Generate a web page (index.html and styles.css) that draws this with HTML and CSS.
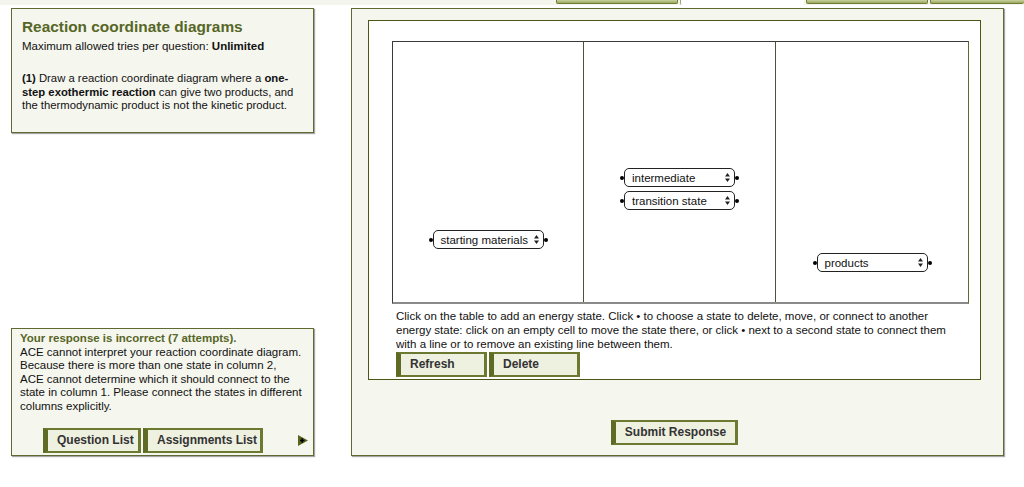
FILE: index.html
```html
<!DOCTYPE html>
<html>
<head>
<meta charset="utf-8">
<title>Reaction coordinate diagrams</title>
<link rel="stylesheet" href="styles.css">
</head>
<body>
<div class="topbar">
  <div class="tab tab-1"></div>
  <div class="tab tab-active"></div>
  <div class="tab tab-3"></div>
  <div class="tab tab-4"></div>
</div>
<div class="main">
  <div class="left-col">
    <div class="panel panel-question">
      <h1 class="title">Reaction coordinate diagrams</h1>
      <p class="tries">Maximum allowed tries per question: <b>Unlimited</b></p>
      <p class="question"><b>(1)</b> Draw a reaction coordinate diagram where a <b>one-<br>step exothermic reaction</b> can give two products, and<br>the thermodynamic product is not the kinetic product.</p>
    </div>
    <div class="panel panel-response">
      <p class="resp-title">Your response is incorrect (7 attempts).</p>
      <p class="resp-text">ACE cannot interpret your reaction coordinate diagram.<br>Because there is more than one state in column 2,<br>ACE cannot determine which it should connect to the<br>state in column 1. Please connect the states in different<br>columns explicitly.</p>
      <div class="nav-row">
        <button class="btn btn-nav btn-questions">Question List</button>
        <button class="btn btn-nav btn-assignments">Assignments List</button>
        <svg class="next-icon" width="10" height="11" viewBox="0 0 10 11"><polygon points="0,0 10,5.5 0,11" fill="#56641c"/><path d="M2 5.5h4.4M4.2 3.3v4.4" stroke="#000" stroke-width="1.5"/></svg>
      </div>
    </div>
  </div>
  <div class="panel panel-work">
    <div class="canvas-box">
      <div class="rcd-table">
        <div class="rcd-col">
          <div class="state" style="top:188px"><span class="dot"></span><div class="state-box"><span>starting materials</span><svg class="updown" width="5" height="9" viewBox="0 0 5 9"><polygon points="2.5,0 5,3.5 0,3.5" fill="#222"/><polygon points="0,5.5 5,5.5 2.5,9" fill="#222"/></svg></div><span class="dot"></span></div>
        </div>
        <div class="rcd-col">
          <div class="state" style="top:126px"><span class="dot"></span><div class="state-box"><span>intermediate</span><svg class="updown" width="5" height="9" viewBox="0 0 5 9"><polygon points="2.5,0 5,3.5 0,3.5" fill="#222"/><polygon points="0,5.5 5,5.5 2.5,9" fill="#222"/></svg></div><span class="dot"></span></div>
          <div class="state" style="top:149px"><span class="dot"></span><div class="state-box"><span>transition state</span><svg class="updown" width="5" height="9" viewBox="0 0 5 9"><polygon points="2.5,0 5,3.5 0,3.5" fill="#222"/><polygon points="0,5.5 5,5.5 2.5,9" fill="#222"/></svg></div><span class="dot"></span></div>
        </div>
        <div class="rcd-col">
          <div class="state" style="top:211px"><span class="dot"></span><div class="state-box"><span>products</span><svg class="updown" width="5" height="9" viewBox="0 0 5 9"><polygon points="2.5,0 5,3.5 0,3.5" fill="#222"/><polygon points="0,5.5 5,5.5 2.5,9" fill="#222"/></svg></div><span class="dot"></span></div>
        </div>
      </div>
      <p class="instructions">Click on the table to add an energy state. Click &bull; to choose a state to delete, move, or connect to another<br>energy state: click on an empty cell to move the state there, or click &bull; next to a second state to connect them<br>with a line or to remove an existing line between them.</p>
      <div class="tool-row">
        <button class="btn btn-fixed">Refresh</button>
        <button class="btn btn-fixed">Delete</button>
      </div>
    </div>
    <div class="submit-row">
      <button class="btn">Submit Response</button>
    </div>
  </div>
</div>
</body>
</html>
```

FILE: styles.css
```css
* { box-sizing: border-box; }

body {
  margin: 0;
  background: #ffffff;
  font-family: "Liberation Sans", Arial, sans-serif;
  font-size: 11.5px;
  color: #111;
  width: 1024px;
  height: 487px;
  overflow: hidden;
}

.topbar {
  height: 5px;
  background: #f4f5ec;
  display: flex;
  padding-left: 556px;
}
.tab {
  height: 4px;
  background: linear-gradient(#c8d19c, #9aa860);
  border: 1px solid #6f7d35;
  border-top: none;
  border-radius: 0 0 2px 2px;
}
.tab-1 { width: 122px; }
.tab-active {
  width: 124px;
  height: 5px;
  background: #ffffff;
  border: none;
  border-left: 1px solid #9aa37a;
  margin-left: 2px;
}
.tab-3 { width: 122px; margin-left: 2px; }
.tab-4 { flex: 1; margin-left: 2px; border-right: none; }

.main {
  display: flex;
  margin-top: 3px;
  padding-left: 11px;
  gap: 37px;
}

.panel {
  background: #f5f6ee;
  border: 1px solid #5f6a32;
  box-shadow: 1px 1px 1px rgba(0, 0, 0, 0.35);
}

.left-col {
  width: 303px;
  height: 448px;
  display: flex;
  flex-direction: column;
  justify-content: space-between;
}

.panel-question {
  height: 125px;
  padding: 9px 8px 0 10px;
  white-space: nowrap;
}
.title {
  margin: 0;
  font-size: 15.4px;
  line-height: 18px;
  font-weight: bold;
  color: #566626;
}
.tries {
  margin: 3px 0 0 0;
  line-height: 14px;
}
.question {
  margin: 19px 0 0 0;
  line-height: 13.5px;
  font-size: 11.3px;
}

.panel-response {
  height: 128px;
  padding: 3px 6px 0 8px;
  line-height: 13.5px;
  white-space: nowrap;
}
.resp-title {
  margin: 0;
  font-weight: bold;
  color: #566626;
}
.resp-text {
  margin: 0;
}
.nav-row {
  display: flex;
  align-items: center;
  margin-top: 15px;
  padding-left: 23px;
  gap: 2px;
}
.nav-row .btn { flex: none; }
.btn-nav {
  padding: 0;
  text-align: center;
}
.btn-questions { width: 98px; }
.btn-assignments { width: 120px; }
.next-icon {
  margin-left: 33px;
  flex: none;
}

.btn {
  height: 25px;
  background: #eef0e0;
  border: 2px solid #6b7a30;
  border-left: 5px solid #5d6b24;
  border-right: 3px solid #6b7a30;
  font-family: "Liberation Sans", Arial, sans-serif;
  font-size: 12px;
  font-weight: bold;
  color: #333;
  padding: 0 9px;
  margin: 0;
  line-height: 19px;
  border-radius: 0;
  white-space: nowrap;
}
.btn-fixed {
  width: 91px;
  text-align: left;
}

.panel-work {
  width: 653px;
  height: 448px;
  padding: 11px 0 0 16px;
}
.canvas-box {
  width: 613px;
  height: 360px;
  background: #ffffff;
  border: 1px solid #4b5815;
  padding: 20px 0 0 23px;
}

.rcd-table {
  width: 577px;
  height: 263px;
  display: flex;
  border: 1px solid #3a3a3a;
  border-right-color: #5f6a32;
  border-bottom: 2px solid #8a8a8a;
}
.rcd-col {
  position: relative;
  width: 191px;
  border-right: 1px solid #4e5236;
}
.rcd-col:nth-child(2) { width: 192px; }
.rcd-col:last-child {
  flex: 1;
  border-right: none;
}

.state {
  position: absolute;
  left: 0;
  right: 0;
  display: flex;
  align-items: center;
  justify-content: center;
}
.dot {
  width: 4px;
  height: 4px;
  border-radius: 50%;
  background: #000;
  flex: none;
}
.state-box {
  width: 111px;
  height: 19px;
  background: #fff;
  border: 1px solid #222;
  border-radius: 5px;
  display: flex;
  align-items: center;
  justify-content: space-between;
  padding: 0 4px 0 7px;
  font-size: 11.5px;
  color: #111;
  white-space: nowrap;
}
.updown { flex: none; }

.instructions {
  margin: 5px 0 0 4px;
  line-height: 14px;
  white-space: nowrap;
}
.tool-row {
  display: flex;
  gap: 2px;
  margin: 1px 0 0 4px;
}

.submit-row {
  width: 613px;
  display: flex;
  justify-content: center;
  margin-top: 40px;
}
```
